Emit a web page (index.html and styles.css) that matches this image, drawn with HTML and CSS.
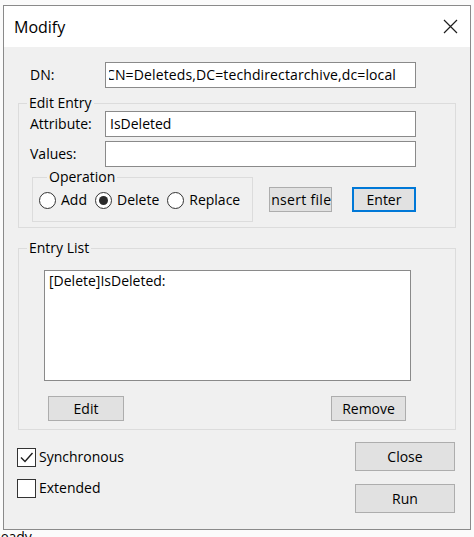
FILE: index.html
```html
<!DOCTYPE html>
<html lang="en">
<head>
<meta charset="utf-8">
<title>Modify</title>
<link rel="stylesheet" href="styles.css">
</head>
<body>
<div class="dialog">
  <div class="titlebar">
    <span class="title">Modify</span>
    <svg class="close" viewBox="0 0 15 15"><path d="M1 1L14 14M14 1L1 14" stroke="#1e1e1e" stroke-width="1.2" fill="none"/></svg>
  </div>
  <div class="content">
    <div class="row dn-row">
      <label class="lbl">DN:</label>
      <div class="textbox dn"><div class="scroll"><span>CN=Deleteds,DC=techdirectarchive,dc=local</span></div></div>
    </div>

    <fieldset class="group edit-entry">
      <legend>Edit Entry</legend>
      <div class="row">
        <label class="lbl">Attribute:</label>
        <div class="textbox">IsDeleted</div>
      </div>
      <div class="row">
        <label class="lbl">Values:</label>
        <div class="textbox"></div>
      </div>
      <div class="op-row">
        <fieldset class="group operation">
          <legend>Operation</legend>
          <div class="radios">
            <span class="radio"><span class="radio-dot"></span>Add</span>
            <span class="radio checked"><span class="radio-dot"></span>Delete</span>
            <span class="radio"><span class="radio-dot"></span>Replace</span>
          </div>
        </fieldset>
        <button class="btn insert"><span>Insert file</span></button>
        <button class="btn enter">Enter</button>
      </div>
    </fieldset>

    <fieldset class="group entry-list">
      <legend>Entry List</legend>
      <div class="listbox">[Delete]IsDeleted:</div>
      <div class="list-btns">
        <button class="btn btn-edit">Edit</button>
        <button class="btn btn-remove">Remove</button>
      </div>
    </fieldset>

    <div class="bottom">
      <div class="checks">
        <div class="check">
          <span class="box"><svg viewBox="0 0 17 17"><path d="M3 8.5L7 12.5L14.5 4" stroke="#1e1e1e" stroke-width="1.4" fill="none"/></svg></span>
          <span>Synchronous</span>
        </div>
        <div class="check">
          <span class="box"></span>
          <span>Extended</span>
        </div>
      </div>
      <div class="actions">
        <button class="btn action">Close</button>
        <button class="btn action">Run</button>
      </div>
    </div>
  </div>
</div>
<div class="status">Ready</div>
</body>
</html>
```
FILE: styles.css
```css
* { box-sizing: border-box; }
html, body { margin: 0; padding: 0; }
body {
  background: #fbfbfb;
  font-family: "Segoe UI", "Open Sans", "Noto Sans", sans-serif;
  font-size: 14px;
  color: #000;
  width: 474px;
  height: 537px;
  overflow: hidden;
}
.dialog {
  margin: 5px 0 0 3px;
  width: 468px;
  height: 525px;
  border: 1px solid #8a8a8a;
  background: #f0f0f0;
  display: flex;
  flex-direction: column;
}
.titlebar {
  height: 41px;
  flex: none;
  background: #fff;
  display: flex;
  align-items: center;
  justify-content: space-between;
  padding: 0 12px 0 10px;
}
.title { font-size: 16px; line-height: 20px; }
.close { width: 15px; height: 15px; display: block; }
.content { flex: 1; padding-top: 15px; }

.row { display: flex; align-items: center; height: 26px; }
.lbl { width: 75px; flex: none; line-height: 20px; }
.textbox {
  width: 311px;
  height: 26px;
  flex: none;
  border: 1px solid #8a8a8a;
  background: #fff;
  padding: 0 4px;
  display: flex;
  align-items: center;
  line-height: 20px;
  white-space: nowrap;
}
.dn-row { padding-left: 26px; }
.dn { padding: 0 3px; }
.dn .scroll {
  flex: 1;
  overflow: hidden;
  display: flex;
  justify-content: flex-end;
  padding-right: 8px;
}
.dn .scroll span { flex: none; letter-spacing: 0.12px; margin-right: 8px; }

.group { border: 1px solid #dcdcdc; margin: 0; padding: 0; min-width: 0; }
.group > legend { padding: 0 2px; margin-left: 8px; line-height: 16px; }

.edit-entry { margin: 7px 0 0 14px; width: 438px; padding-bottom: 5px; }
.edit-entry .row { padding-left: 11px; }
.edit-entry .row + .row { margin-top: 4px; }

.op-row { display: flex; align-items: flex-start; padding-left: 13px; margin-top: 2px; }
.operation { width: 221px; flex: none; padding: 4px 0 10px 6px; }
.radios { display: flex; align-items: center; height: 22px; gap: 8px; }
.radio { display: flex; align-items: center; gap: 5px; line-height: 20px; }
.radio-dot {
  width: 17px;
  height: 17px;
  border: 1px solid #333;
  border-radius: 50%;
  background: #fff;
  display: flex;
  align-items: center;
  justify-content: center;
}
.radio.checked .radio-dot::after {
  content: "";
  width: 9px;
  height: 9px;
  border-radius: 50%;
  background: #2a2a2a;
}

.btn {
  font: inherit;
  color: #000;
  background: #e1e1e1;
  border: 1px solid #adadad;
  padding: 0;
  height: 25px;
  line-height: 20px;
  display: flex;
  align-items: center;
  justify-content: center;
  white-space: nowrap;
  overflow: hidden;
  flex: none;
}
.insert { width: 63px; margin: 18px 0 0 16px; justify-content: flex-start; }
.insert span { margin-left: -3px; letter-spacing: 0.3px; }
.enter { width: 64px; margin: 18px 0 0 20px; border: 2px solid #0078d7; }

.entry-list { margin: 12px 0 0 14px; width: 438px; padding: 14px 0 8px 0; }
.listbox {
  margin-left: 25px;
  width: 367px;
  height: 111px;
  border: 1px solid #8a8a8a;
  background: #fff;
  padding: 0 4px;
  line-height: 20px;
}
.list-btns { display: flex; justify-content: space-between; margin-top: 15px; padding: 0 49px 0 29px; }
.btn-edit { width: 76px; }
.btn-remove { width: 75px; }

.bottom { display: flex; justify-content: space-between; margin-top: 12px; padding: 0 15px 0 13px; }
.checks { display: flex; flex-direction: column; gap: 7px; padding-top: 3px; }
.check { display: flex; align-items: center; height: 24px; gap: 3px; line-height: 20px; }
.box { width: 19px; height: 19px; border: 1px solid #333; background: #fff; display: block; }
.box svg { width: 17px; height: 17px; display: block; }
.actions { display: flex; flex-direction: column; gap: 13px; }
.action { width: 100px; height: 29px; }

.status { line-height: 14px; text-indent: -8px; white-space: nowrap; }
```
